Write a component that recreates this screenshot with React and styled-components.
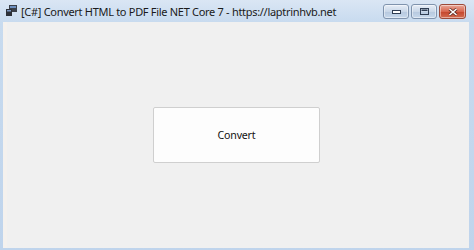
import React from "react";
import styled, { createGlobalStyle } from "styled-components";

const Global = createGlobalStyle`
  html, body { margin: 0; padding: 0; }
  body { width: 474px; height: 250px; overflow: hidden; font-family: "Noto Sans", "Open Sans", sans-serif; }
  #root { width: 474px; height: 250px; }
`;

const Window = styled.div`
  width: 474px;
  height: 250px;
  display: flex;
  flex-direction: column;
  background: linear-gradient(#dae6f4, #c8dbef 22px, #bfd4ec);
  box-sizing: border-box;
`;

const TitleBar = styled.div`
  height: 22px;
  flex: none;
  display: flex;
  align-items: center;
  padding: 0 8px 0 6px;
`;

const AppIcon = styled.svg`
  width: 11px;
  height: 11px;
  flex: none;
  margin-right: 4px;
  margin-top: -1px;
`;

const Title = styled.div`
  font-size: 11px;
  color: #1a1a1a;
  white-space: nowrap;
  flex: 1;
  letter-spacing: -0.3px;
`;

const Controls = styled.div`
  display: flex;
  gap: 2px;
  align-self: flex-start;
  margin-top: 4px;
`;

const CtrlButton = styled.div`
  width: ${(p) => (p.$close ? 27 : 26)}px;
  height: 15px;
  box-sizing: border-box;
  border: 1px solid ${(p) => (p.$close ? "#9c4a3a" : "#7f93ad")};
  border-radius: 3px;
  background: ${(p) =>
    p.$close
      ? "linear-gradient(#e9a99c, #d7664f 50%, #c4452c 51%, #d26b50)"
      : "linear-gradient(#e7eef7, #c9d7e8 50%, #b6c8de 51%, #c7d8ec)"};
  display: flex;
  align-items: center;
  justify-content: center;
  box-shadow: inset 0 0 0 1px rgba(255, 255, 255, 0.45);
`;

const Client = styled.div`
  flex: 1;
  margin: 0 5px 2px 3px;
  border-left: 4px solid #f4f1ee;
  background: #f0f0f0;
  display: flex;
  align-items: center;
  justify-content: center;
  padding-right: 2px;
`;

const ConvertButton = styled.button`
  width: 167px;
  height: 56px;
  box-sizing: border-box;
  background: #fdfdfd;
  border: 1px solid #cfcfcf;
  border-radius: 2px;
  font-family: "Noto Sans", "Open Sans", sans-serif;
  font-size: 10.6px;
  letter-spacing: -0.2px;
  color: #111;
  padding: 0;
  margin-left: -1px;
`;

export default function App() {
  return (
    <>
      <Global />
      <Window>
        <TitleBar>
          <AppIcon viewBox="0 0 11 11">
            <rect x="3" y="0" width="8" height="7" fill="#3a3f48" />
            <rect x="4" y="1" width="6" height="2" fill="#6d8fbf" />
            <rect x="0" y="4" width="6" height="7" fill="#2c3038" />
            <rect x="1" y="5" width="4" height="1.5" fill="#7b96c0" />
          </AppIcon>
          <Title>[C#] Convert HTML to PDF File NET Core 7 - https://laptrinhvb.net</Title>
          <Controls>
            <CtrlButton>
              <svg width="9" height="4" viewBox="0 0 9 4">
                <rect x="0.5" y="0.5" width="8" height="3" fill="#fff" stroke="#2f3d52" />
              </svg>
            </CtrlButton>
            <CtrlButton>
              <svg width="9" height="7" viewBox="0 0 9 7">
                <rect x="0.5" y="0.5" width="8" height="6" fill="none" stroke="#2f3d52" />
                <rect x="1.5" y="1.5" width="6" height="1.5" fill="#2f3d52" />
              </svg>
            </CtrlButton>
            <CtrlButton $close>
              <svg width="10" height="8" viewBox="0 0 10 8">
                <path d="M1.5 1 L8.5 7 M8.5 1 L1.5 7" stroke="#5a2a22" strokeWidth="3" />
                <path d="M1.5 1 L8.5 7 M8.5 1 L1.5 7" stroke="#fff" strokeWidth="1.6" />
              </svg>
            </CtrlButton>
          </Controls>
        </TitleBar>
        <Client>
          <ConvertButton>Convert</ConvertButton>
        </Client>
      </Window>
    </>
  );
}
